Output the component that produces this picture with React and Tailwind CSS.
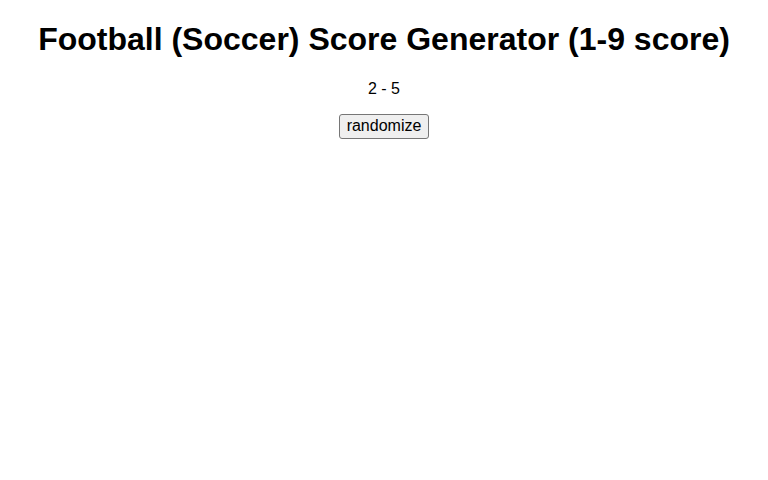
export default function App() {
  return (
    <div className="text-center text-black" style={{ fontFamily: '"Liberation Sans", Arial, sans-serif' }}>
      <h1 className="text-[32px] font-bold leading-[37px] pt-[21px] mb-[22px]">Football (Soccer) Score Generator (1-9 score)</h1>
      <p className="text-[16px] leading-[18px] mb-[16px]">2 - 5</p>
      <button className="text-[16px] leading-[18px] px-[7px] pt-[2px] pb-[3px] bg-[#efefef] border border-[#767676] rounded-[3px] text-black">randomize</button>
    </div>
  );
}
